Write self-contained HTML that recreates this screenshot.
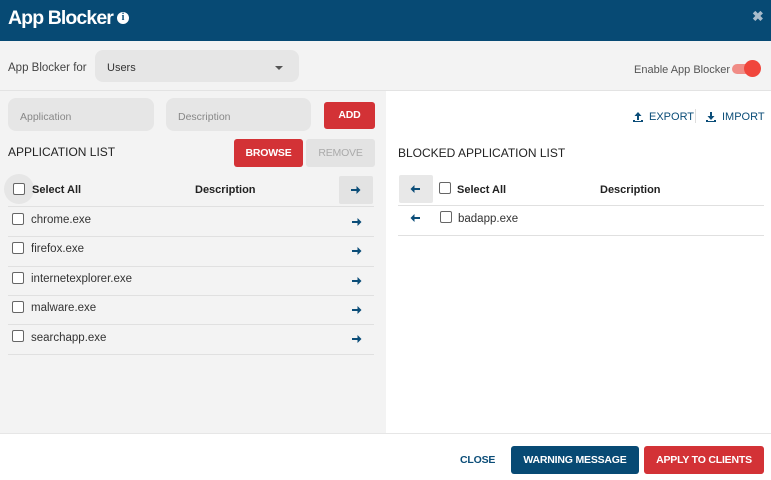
<!DOCTYPE html>
<html><head><meta charset="utf-8"><style>
*{box-sizing:border-box;margin:0;padding:0}
body{width:771px;height:480px;overflow:hidden;background:#fff;font-family:"Liberation Sans",Roboto,sans-serif;position:relative;color:#333}
.a{position:absolute}
.hdr{left:0;top:0;width:771px;height:41px;background:#074a74}
.bar{left:0;top:41px;width:771px;height:50px;background:#f3f3f3;border-bottom:1px solid #e3e3e3}
.lp{left:0;top:91px;width:386px;height:342px;background:#f3f3f3}
.ft{left:0;top:433px;width:771px;height:47px;border-top:1px solid #e6e6e6;background:#fff}
.inp{background:#e6e6e6;border-radius:8px;height:33px;font-size:10.5px;color:#888;padding:13px 12px 0}
.btn{font-size:10.5px;font-weight:bold;color:#fff;text-align:center;border-radius:3px;letter-spacing:-0.2px}
.cb{width:12px;height:12px;border:1.3px solid #666;border-radius:2px;background:#fff}
.t{font-size:11.5px;color:#333}
.b{font-size:11px;font-weight:bold;color:#222}
.line{height:1px;background:#e0e0e0}
.arr{color:#0b4d78;font-size:11px}
</style></head><body>
<div class="a hdr"></div>
<div class="a" style="left:8px;top:7px;color:#fff;font-size:19.5px;font-weight:bold;letter-spacing:-0.9px">App Blocker</div>
<div class="a" style="left:117px;top:12px;width:12px;height:12px;border-radius:50%;background:#fff;color:#074a74;font-size:10px;font-weight:bold;text-align:center;line-height:12px;font-family:'Liberation Serif',serif">i</div>
<div class="a" style="left:752px;top:8px;color:#a9bccb;font-size:14px;font-weight:bold">✖</div>

<div class="a bar"></div>
<div class="a t" style="left:8px;top:62px;font-size:11.5px;color:#444">App Blocker for</div>
<div class="a" style="left:95px;top:50px;width:204px;height:32px;background:#e6e6e6;border-radius:8px"></div>
<div class="a t" style="left:107px;top:62px;font-size:11px">Users</div>
<div class="a" style="left:275px;top:66px;width:0;height:0;border-left:4px solid transparent;border-right:4px solid transparent;border-top:4px solid #555"></div>
<div class="a t" style="left:634px;top:64px;font-size:11px;color:#555">Enable App Blocker</div>
<div class="a" style="left:732px;top:64px;width:25px;height:10px;border-radius:5px;background:#f08c86"></div>
<div class="a" style="left:744px;top:60px;width:17px;height:17px;border-radius:50%;background:#f0463c"></div>

<div class="a lp"></div>
<div class="a inp" style="left:8px;top:98px;width:146px">Application</div>
<div class="a inp" style="left:166px;top:98px;width:145px">Description</div>
<div class="a btn" style="left:324px;top:102px;width:51px;height:27px;background:#d33236;line-height:27px">ADD</div>
<div class="a" style="left:8px;top:145px;font-size:12px;color:#222">APPLICATION LIST</div>
<div class="a btn" style="left:234px;top:139px;width:69px;height:28px;background:#d33236;line-height:28px">BROWSE</div>
<div class="a btn" style="left:306px;top:139px;width:69px;height:28px;background:#e3e3e3;color:#aaa;font-weight:normal;line-height:28px">REMOVE</div>
<div class="a" style="left:4px;top:174px;width:30px;height:30px;border-radius:50%;background:#e6e6e6"></div>
<div class="a cb" style="left:13px;top:183px"></div>
<div class="a b" style="left:32px;top:184px">Select All</div>
<div class="a b" style="left:195px;top:184px">Description</div>
<div class="a" style="left:339px;top:176px;width:34px;height:28px;background:#e3e3e3;border-radius:2px"></div>
<svg class="a" style="left:350px;top:185px" width="11" height="10" viewBox="0 0 11 10"><path d="M1 4h5.5V1L10.5 5 6.5 9V6H1z" fill="#0b4d78"/></svg>
<div class="a line" style="left:8px;top:206px;width:366px"></div>

<div class="a cb" style="left:12px;top:213px"></div><div class="a t" style="left:31px;top:214px">chrome.exe</div>
<div class="a line" style="left:8px;top:236px;width:366px"></div>
<div class="a cb" style="left:12px;top:242px"></div><div class="a t" style="left:31px;top:243px">firefox.exe</div>
<div class="a line" style="left:8px;top:266px;width:366px"></div>
<div class="a cb" style="left:12px;top:272px"></div><div class="a t" style="left:31px;top:273px">internetexplorer.exe</div>
<div class="a line" style="left:8px;top:295px;width:366px"></div>
<div class="a cb" style="left:12px;top:301px"></div><div class="a t" style="left:31px;top:302px">malware.exe</div>
<div class="a line" style="left:8px;top:324px;width:366px"></div>
<div class="a cb" style="left:12px;top:330px"></div><div class="a t" style="left:31px;top:332px">searchapp.exe</div>
<div class="a line" style="left:8px;top:354px;width:366px"></div>
<svg class="a" style="left:351px;top:217px" width="11" height="10" viewBox="0 0 11 10"><path d="M1 4h5.5V1L10.5 5 6.5 9V6H1z" fill="#0b4d78"/></svg>
<svg class="a" style="left:351px;top:246px" width="11" height="10" viewBox="0 0 11 10"><path d="M1 4h5.5V1L10.5 5 6.5 9V6H1z" fill="#0b4d78"/></svg>
<svg class="a" style="left:351px;top:276px" width="11" height="10" viewBox="0 0 11 10"><path d="M1 4h5.5V1L10.5 5 6.5 9V6H1z" fill="#0b4d78"/></svg>
<svg class="a" style="left:351px;top:305px" width="11" height="10" viewBox="0 0 11 10"><path d="M1 4h5.5V1L10.5 5 6.5 9V6H1z" fill="#0b4d78"/></svg>
<svg class="a" style="left:351px;top:334px" width="11" height="10" viewBox="0 0 11 10"><path d="M1 4h5.5V1L10.5 5 6.5 9V6H1z" fill="#0b4d78"/></svg>

<svg class="a" style="left:632px;top:111px" width="12" height="12" viewBox="0 0 12 12"><path d="M6 1L2.5 5H5v4h2V5h2.5z M1 9h2v1h6V9h2v2H1z" fill="#0b4d78"/></svg>
<div class="a arr" style="left:649px;top:111px">EXPORT</div>
<div class="a" style="left:695px;top:109px;width:1px;height:14px;background:#ddd"></div>
<svg class="a" style="left:705px;top:111px" width="12" height="12" viewBox="0 0 12 12"><path d="M5 1h2v4h2.5L6 9 2.5 5H5z M1 9h2v1h6V9h2v2H1z" fill="#0b4d78"/></svg>
<div class="a arr" style="left:722px;top:111px">IMPORT</div>
<div class="a" style="left:398px;top:146px;font-size:12px;color:#222">BLOCKED APPLICATION LIST</div>
<div class="a" style="left:399px;top:175px;width:34px;height:28px;background:#e8e8e8;border-radius:2px"></div>
<svg class="a" style="left:410px;top:184px" width="11" height="10" viewBox="0 0 11 10"><path d="M10 4H4.5V1L0.5 5 4.5 9V6H10z" fill="#0b4d78"/></svg>
<div class="a cb" style="left:439px;top:182px"></div>
<div class="a b" style="left:457px;top:184px">Select All</div>
<div class="a b" style="left:600px;top:184px">Description</div>
<div class="a line" style="left:398px;top:205px;width:366px"></div>
<svg class="a" style="left:410px;top:213px" width="11" height="10" viewBox="0 0 11 10"><path d="M10 4H4.5V1L0.5 5 4.5 9V6H10z" fill="#0b4d78"/></svg>
<div class="a cb" style="left:440px;top:211px"></div>
<div class="a t" style="left:458px;top:213px">badapp.exe</div>
<div class="a line" style="left:398px;top:235px;width:366px"></div>

<div class="a ft"></div>
<div class="a btn" style="left:460px;top:454px;color:#0b4d78">CLOSE</div>
<div class="a btn" style="left:511px;top:446px;width:128px;height:28px;background:#074a74;line-height:28px">WARNING MESSAGE</div>
<div class="a btn" style="left:644px;top:446px;width:120px;height:28px;background:#d33236;line-height:28px">APPLY TO CLIENTS</div>
</body></html>
